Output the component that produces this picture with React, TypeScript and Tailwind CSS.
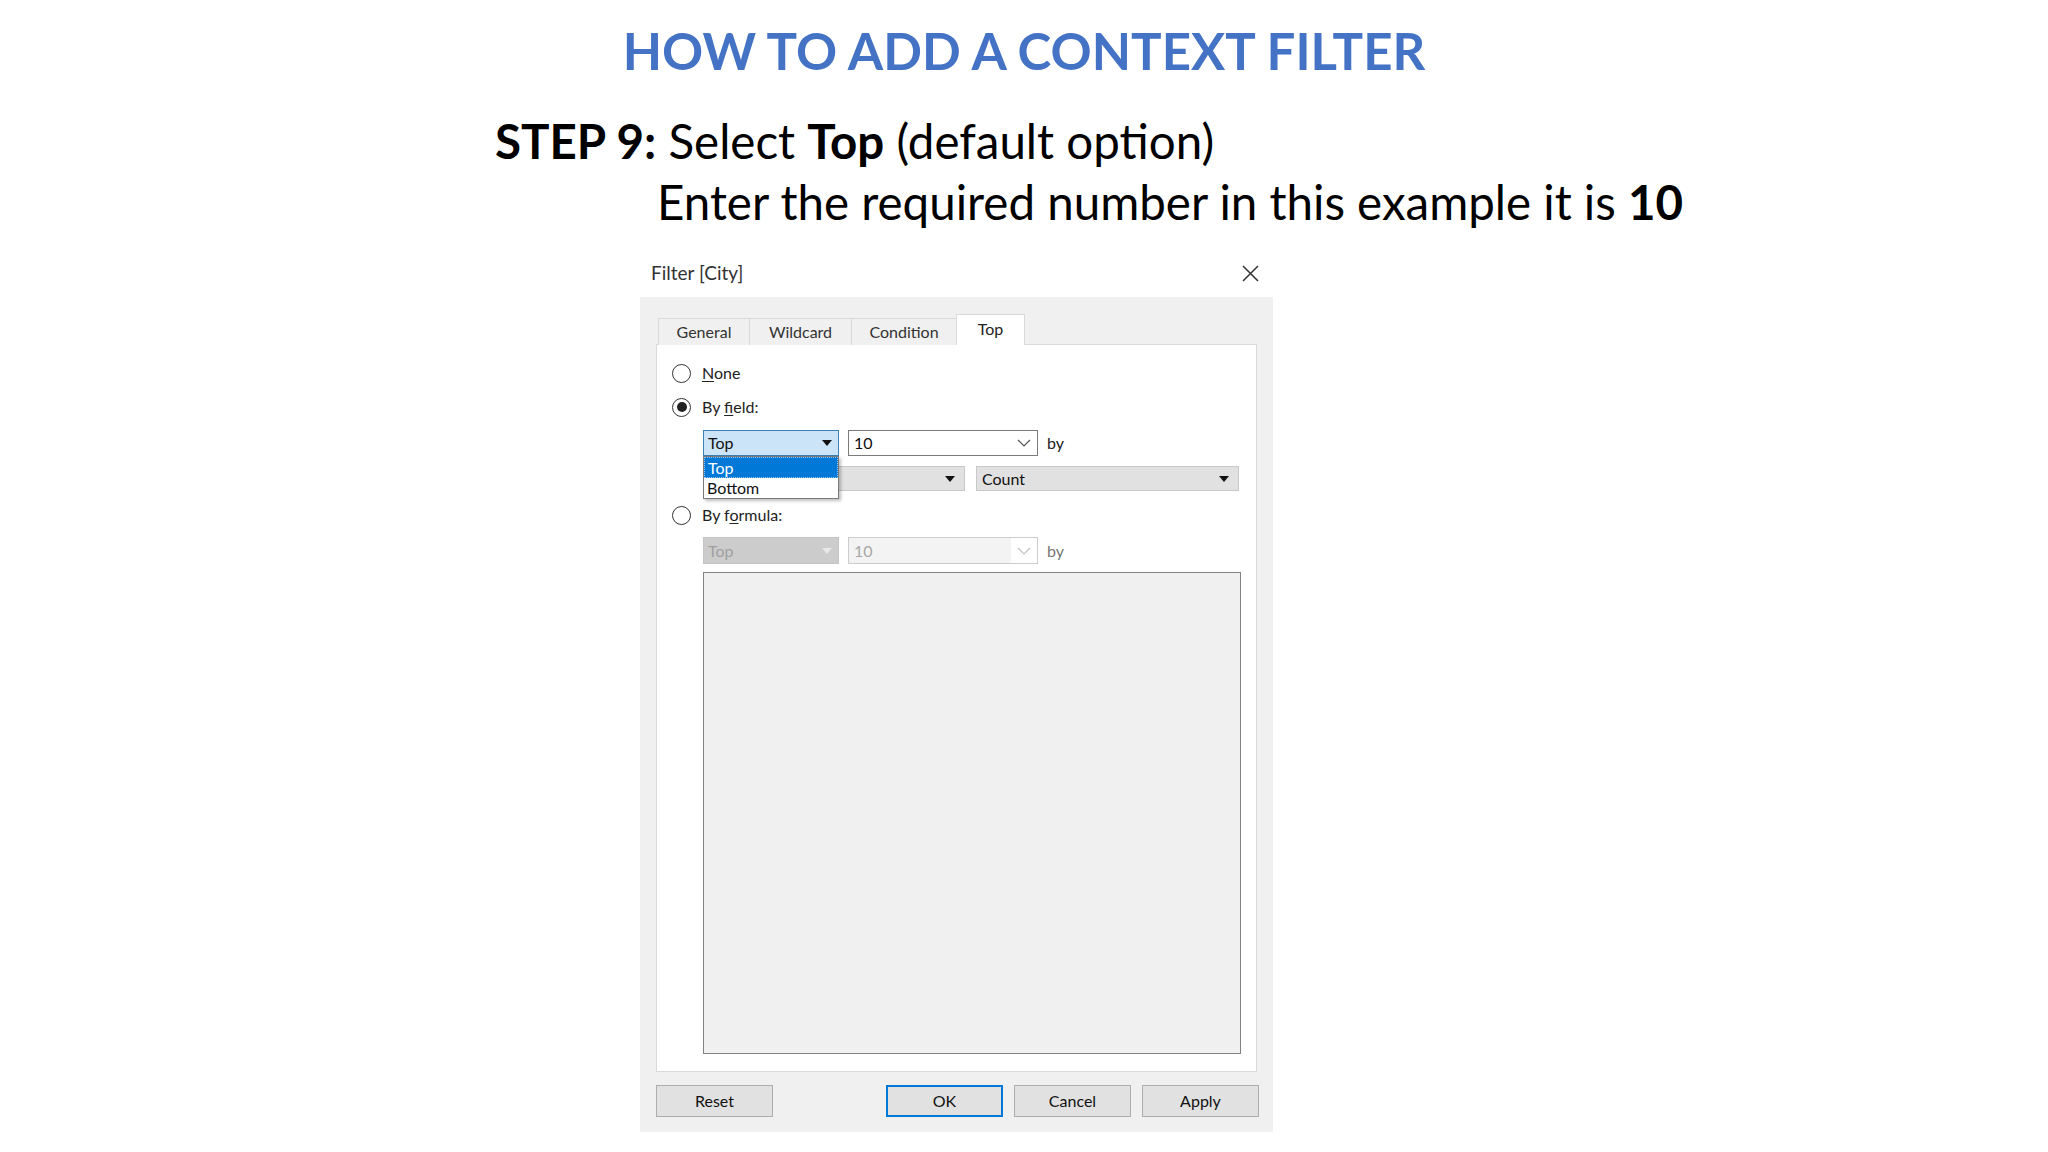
import React from "react";

const Tri = ({ color = "#111" }: { color?: string }) => (
  <svg width="10" height="6" viewBox="0 0 10 6">
    <path d="M0 0h10L5 6z" fill={color} />
  </svg>
);

const Chevron = ({ color = "#555" }: { color?: string }) => (
  <svg width="14" height="8" viewBox="0 0 14 8">
    <path d="M1 1l6 6 6-6" fill="none" stroke={color} strokeWidth="1.2" />
  </svg>
);

const Radio = ({ checked }: { checked?: boolean }) => (
  <div className="w-[19px] h-[19px] rounded-full border-[1.5px] border-[#333] bg-white flex items-center justify-center shrink-0">
    {checked && <div className="w-[10px] h-[10px] rounded-full bg-[#222]" />}
  </div>
);

const RadioRow = ({ checked, children }: { checked?: boolean; children: React.ReactNode }) => (
  <div className="flex items-center h-[20px] gap-[11px]">
    <Radio checked={checked} />
    <span className="text-[16px] text-[#222]">{children}</span>
  </div>
);

const Tab = ({ label, active, w }: { label: string; active?: boolean; w: string }) => (
  <div
    className={
      active
        ? `${w} h-[31px] -ml-px bg-white border border-b-0 border-[#d9d9d9] flex items-center justify-center text-[16px] text-[#222] pb-[2px]`
        : `${w} h-[27px] -ml-px bg-[#f0f0f0] border border-b-0 border-[#d9d9d9] flex items-center justify-center text-[16px] text-[#333]`
    }
  >
    {label}
  </div>
);

const Button = ({ label, primary, w }: { label: string; primary?: boolean; w: string }) => (
  <div
    className={
      primary
        ? `${w} h-[32px] bg-[#e1e1e1] border-2 border-[#0078d7] flex items-center justify-center text-[16px] text-[#111]`
        : `${w} h-[32px] bg-[#e1e1e1] border border-[#adadad] flex items-center justify-center text-[16px] text-[#111]`
    }
  >
    {label}
  </div>
);

export default function App() {
  return (
    <div className="w-[2048px] h-[1152px] bg-white overflow-hidden font-['Lato',sans-serif] flex flex-col">
      <h1 className="mt-[22px] text-center text-[51px] leading-[58px] font-bold text-[#4472c4]">
        HOW TO ADD A CONTEXT FILTER
      </h1>

      <div className="mt-[30px] pl-[495px] text-[47.5px] leading-[61px] text-black">
        <div>
          <span className="font-bold">STEP 9:</span> Select <span className="font-bold">Top</span> (default option)
        </div>
        <div className="pl-[162px]">
          Enter the required number in this example it is <span className="font-bold">10</span>
        </div>
      </div>

      {/* Filter dialog */}
      <div className="mt-[18px] ml-[640px] w-[633px]">
        <div className="h-[47px] flex items-center justify-between pl-[11px] pr-[14px]">
          <span className="text-[19px] text-[#333]">Filter [City]</span>
          <svg width="17" height="17" viewBox="0 0 17 17">
            <path d="M1 1l15 15M16 1L1 16" stroke="#333" strokeWidth="1.5" />
          </svg>
        </div>

        <div className="h-[835px] bg-[#f0f0f0] px-[16px] pt-[17px]">
          <div className="relative z-10 flex items-end h-[31px] -mb-px pl-[3px]">
            <Tab label="General" w="w-[92px]" />
            <Tab label="Wildcard" w="w-[103px]" />
            <Tab label="Condition" w="w-[106px]" />
            <Tab label="Top" active w="w-[69px]" />
          </div>

          <div className="relative w-[601px] h-[728px] bg-white border border-[#d9d9d9] pt-[18px] pl-[15px]">
            <RadioRow>
              <span className="underline underline-offset-2">N</span>one
            </RadioRow>
            <div className="mt-[14px]">
              <RadioRow checked>
                By <span className="underline underline-offset-2">f</span>ield:
              </RadioRow>
            </div>

            <div className="mt-[13px] ml-[31px] flex items-center gap-[9px]">
              <div className="w-[136px] h-[26px] bg-[#cce4f7] border border-[#3c7fb1] flex items-center justify-between pl-[4px] pr-[6px] text-[16px] text-[#111]">
                <span>Top</span>
                <Tri />
              </div>
              <div className="w-[190px] h-[26px] bg-white border border-[#7a7a7a] flex items-center justify-between pl-[5px] pr-[6px] text-[16px] text-[#111]">
                <span>10</span>
                <Chevron />
              </div>
              <span className="text-[16px] text-[#222]">by</span>
            </div>

            <div className="mt-[10px] ml-[31px] flex items-center gap-[11px]">
              <div className="w-[262px] h-[25px] bg-[#e1e1e1] border border-[#c8c8c8] flex items-center justify-end pr-[9px]">
                <Tri />
              </div>
              <div className="w-[263px] h-[25px] bg-[#e1e1e1] border border-[#c8c8c8] flex items-center justify-between pl-[5px] pr-[9px] text-[16px] text-[#111]">
                <span>Count</span>
                <Tri />
              </div>
            </div>

            <div className="mt-[14px]">
              <RadioRow>
                By f<span className="underline underline-offset-2">o</span>rmula:
              </RadioRow>
            </div>

            <div className="mt-[12px] ml-[31px] flex items-center gap-[9px]">
              <div className="w-[136px] h-[27px] bg-[#cccccc] border border-[#c4c4c4] flex items-center justify-between pl-[4px] pr-[6px] text-[16px] text-[#a0a0a0]">
                <span>Top</span>
                <Tri color="#e8e8e8" />
              </div>
              <div className="w-[190px] h-[27px] bg-[#f3f3f3] border border-[#cccccc] flex items-center justify-between pl-[5px] text-[16px] text-[#a8a8a8]">
                <span>10</span>
                <div className="h-full w-[26px] bg-white flex items-center justify-center">
                  <Chevron color="#c0c0c0" />
                </div>
              </div>
              <span className="text-[16px] text-[#777]">by</span>
            </div>

            <div className="mt-[8px] ml-[31px] w-[538px] h-[482px] bg-[#f0f0f0] border border-[#828282]" />

            {/* open dropdown list */}
            <div className="absolute left-[46px] top-[111px] w-[136px] h-[43px] bg-white border border-[#7a7a7a] shadow-[2px_2px_3px_rgba(0,0,0,0.25)] flex flex-col text-[16px]">
              <div className="h-[21px] bg-[#0078d7] text-white flex items-center pl-[3px] border border-dotted border-[#9cc6ea]">
                Top
              </div>
              <div className="h-[20px] text-[#111] flex items-center pl-[3px]">Bottom</div>
            </div>
          </div>

          <div className="mt-[13px] flex w-[603px]">
            <Button label="Reset" w="w-[117px]" />
            <div className="ml-auto flex gap-[11px]">
              <Button label="OK" primary w="w-[117px]" />
              <Button label="Cancel" w="w-[117px]" />
              <Button label="Apply" w="w-[117px]" />
            </div>
          </div>
        </div>
      </div>
    </div>
  );
}
